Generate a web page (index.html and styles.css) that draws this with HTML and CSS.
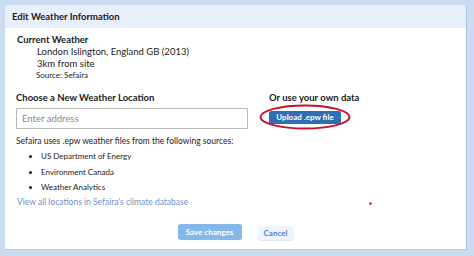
FILE: index.html
```html
<!DOCTYPE html>
<html>
<head>
<meta charset="utf-8">
<link rel="stylesheet" href="styles.css">
</head>
<body>
<div class="dialog">
  <div class="header">Edit Weather Information</div>
  <div class="content">
    <div class="current">
      <div class="title">Current Weather</div>
      <div class="line">London Islington, England GB (2013)</div>
      <div class="line">3km from site</div>
      <div class="source">Source: Sefaira</div>
    </div>
    <div class="cols">
      <div class="left">
        <div class="title">Choose a New Weather Location</div>
        <div class="input">Enter address</div>
        <div class="note">Sefaira uses .epw weather files from the following sources:</div>
        <ul class="list">
          <li>US Department of Energy</li>
          <li>Environment Canada</li>
          <li>Weather Analytics</li>
        </ul>
        <div class="link">View all locations in Sefaira's climate database</div>
      </div>
      <div class="right">
        <div class="title">Or use your own data</div>
        <div class="upload-wrap">
          <div class="upload">Upload .epw file</div>
          <svg class="ring" width="92" height="26" viewBox="0 0 92 26"><ellipse cx="46" cy="13" rx="44.5" ry="11.5" fill="none" stroke="#c8102e" stroke-width="2"/></svg>
        </div>
      </div>
    </div>
    <div class="footer">
      <div class="btn save">Save changes</div>
      <div class="btn cancel">Cancel</div>
    </div>
    <span class="dot"></span>
  </div>
</div>
</body>
</html>
```
FILE: styles.css
```css
html, body { margin: 0; padding: 0; }
body {
  width: 474px; height: 256px; overflow: hidden;
  background: #cbdcf1;
  font-family: Lato, "Open Sans", sans-serif;
  color: #1c1c1c;
  font-size: 9.5px;
}
.dialog {
  position: relative;
  margin: 5px 0 0 5px;
  width: 461px; height: 244px;
  background: #fff;
  border-right: 1px solid #a9c2e4;
  border-bottom: 1px solid #b7cdea;
}
.header {
  height: 23px; line-height: 23px;
  background: #e7effb;
  padding-left: 7px;
  font-weight: bold; font-size: 9.5px;
}
.content { padding: 0 0 0 11px; }
.current { padding: 6px 0 0 1px; }
.title { font-weight: bold; line-height: 12px; }
.line { padding-left: 20px; line-height: 12px; }
.source { padding-left: 19px; font-size: 8px; line-height: 10px; }
.cols { display: flex; margin-top: 12px; }
.left { width: 232px; }
.right { margin-left: 21px; }
.input {
  margin-top: 4px;
  height: 19px; line-height: 19px;
  border: 1px solid #b9b9b9;
  padding-left: 5px;
  color: #8a8a8a; font-size: 9.5px;
  box-sizing: content-box;
  width: 225px;
}
.note { margin-top: 6px; line-height: 12px; font-size: 8.5px; }
.list { margin: 2px 0 0; padding: 0 0 0 25px; font-size: 8px; line-height: 15.5px; }
.list li { padding-left: 0; }
.link { line-height: 12px; color: #6f93c6; font-size: 8.5px; margin-left: 1px; }
.upload-wrap { position: relative; margin-top: 7px; width: 72px; }
.upload {
  width: 72px; height: 13px; line-height: 13px;
  background: #2f6eb4; color: #fff;
  font-weight: bold; font-size: 8px; text-align: center;
  border-radius: 2px;
}
.ring { position: absolute; left: -10px; top: -7px; }
.footer { display: flex; justify-content: center; gap: 16px; align-items: flex-end; margin-top: 16px; padding-right: 11px; }
.btn { font-size: 8px; font-weight: bold; text-align: center; border-radius: 3px; }
.save { width: 64px; height: 16px; line-height: 16px; background: #85b8e8; color: #fff; }
.cancel { width: 36px; height: 14px; line-height: 14px; background: #eef4fb; color: #5a83bd; box-shadow: 0 1px 1px #dfe6ef; }
.dot { position: absolute; left: 364px; top: 197px; width: 3px; height: 3px; border-radius: 50%; background: #c64a5c; }
```
